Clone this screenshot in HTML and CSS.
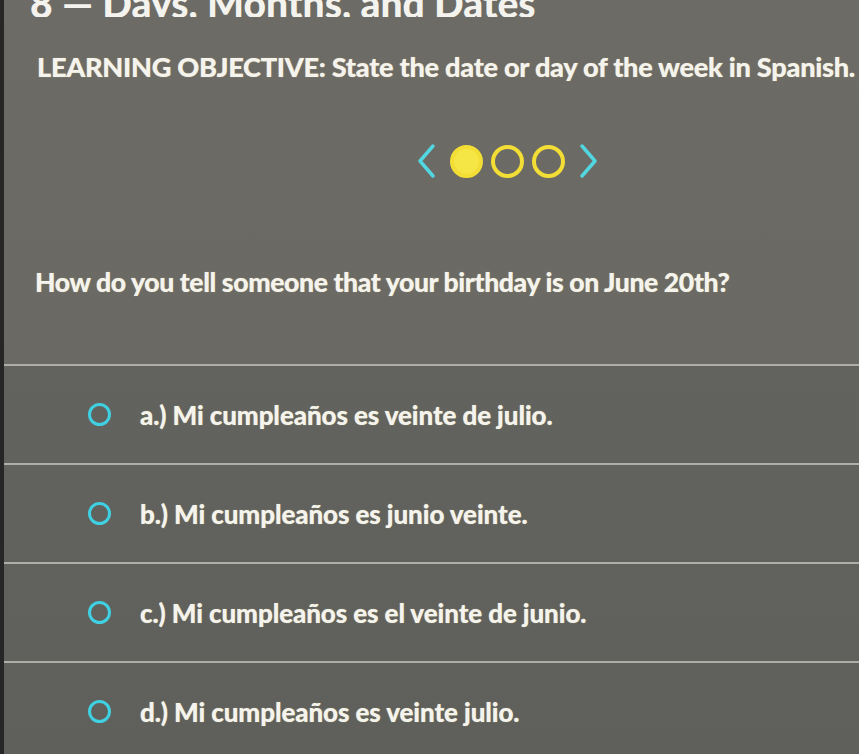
FILE: index.html
```html
<!DOCTYPE html>
<html lang="en">
<head>
<meta charset="utf-8">
<title>Days, Months, and Dates</title>
<link rel="stylesheet" href="styles.css">
</head>
<body>
<div class="page">
  <header class="title-clip">
    <h1 class="title">8 — Days, Months, and Dates</h1>
  </header>
  <p class="objective">LEARNING OBJECTIVE: State the date or day of the week in Spanish.</p>
  <nav class="pager">
    <svg class="chev" width="20" height="36" viewBox="0 0 20 36"><path d="M17 3 L4 18 L17 33" fill="none" stroke="#52d6e0" stroke-width="3.5" stroke-linecap="round" stroke-linejoin="round"/></svg>
    <span class="dot dot-on"></span>
    <span class="dot"></span>
    <span class="dot"></span>
    <svg class="chev" width="20" height="36" viewBox="0 0 20 36"><path d="M3 3 L16 18 L3 33" fill="none" stroke="#52d6e0" stroke-width="3.5" stroke-linecap="round" stroke-linejoin="round"/></svg>
  </nav>
  <h2 class="question">How do you tell someone that your birthday is on June 20th?</h2>
  <ul class="options">
    <li class="option"><span class="radio"></span><span class="label">a.) Mi cumpleaños es veinte de julio.</span></li>
    <li class="option"><span class="radio"></span><span class="label">b.) Mi cumpleaños es junio veinte.</span></li>
    <li class="option"><span class="radio"></span><span class="label">c.) Mi cumpleaños es el veinte de junio.</span></li>
    <li class="option"><span class="radio"></span><span class="label">d.) Mi cumpleaños es veinte julio.</span></li>
  </ul>
</div>
</body>
</html>
```
FILE: styles.css
```css
* { box-sizing: border-box; }
html, body { margin: 0; padding: 0; }
body {
  background: #6b6963;
  font-family: Lato, "Open Sans", sans-serif;
  color: #f4f3ee;
  overflow: hidden;
}
.page {
  min-height: 754px;
  border-left: 4px solid #262626;
  background: linear-gradient(to bottom, #6d6b65 0, #6a6964 363px, #62635f 366px, #5f605c 754px);
}
.title-clip {
  height: 17px;
  overflow: hidden;
  display: flex;
  align-items: flex-end;
  padding-left: 26px;
}
.title {
  margin: 0;
  font-size: 39px;
  font-weight: 900;
  line-height: 28px;
  white-space: nowrap;
}
.objective {
  margin: 34px 0 0 33px;
  font-size: 27.2px;
  font-weight: 900;
  line-height: 32px;
  letter-spacing: -0.3px;
  white-space: nowrap;
  text-shadow: 0 0 1px rgba(255, 240, 150, 0.6);
}
.pager {
  margin-top: 58px;
  height: 40px;
  display: flex;
  align-items: center;
  justify-content: center;
  gap: 8px;
  padding-left: 152px;
}
.pager .chev { margin: 0 6px; }
.dot {
  width: 33px;
  height: 33px;
  border-radius: 50%;
  border: 4px solid #f2de35;
}
.dot-on { background: #f5e545; }
.question {
  margin: 84px 0 0 31px;
  font-size: 26.6px;
  font-weight: 900;
  line-height: 34px;
  letter-spacing: -0.4px;
  white-space: nowrap;
  text-shadow: 0 0 1px rgba(255, 240, 150, 0.6);
}
.options {
  list-style: none;
  margin: 65px 0 0 0;
  padding: 0;
}
.option {
  height: 99px;
  border-top: 2px solid #aeaea8;
  display: flex;
  align-items: center;
  padding-left: 84px;
  gap: 29px;
}
.radio {
  width: 23px;
  height: 23px;
  border-radius: 50%;
  border: 3px solid #3fd0e2;
  flex: none;
}
.label {
  font-size: 26px;
  font-weight: 900;
  letter-spacing: -0.1px;
  line-height: 32px;
  white-space: nowrap;
  text-shadow: 0 0 1px rgba(255, 240, 150, 0.6);
}
```
